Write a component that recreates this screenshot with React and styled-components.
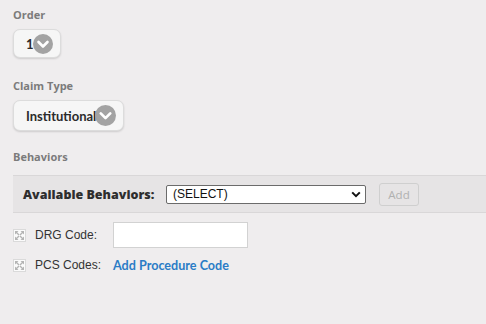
import React from "react";
import styled, { createGlobalStyle } from "styled-components";

const GlobalStyle = createGlobalStyle`
  html, body {
    margin: 0;
    padding: 0;
    background: #efedee;
  }
  body {
    font-family: "Lato", "Liberation Sans", sans-serif;
  }
`;

const Page = styled.div`
  padding: 8px 0 0 13px;
  width: 486px;
  height: 324px;
  box-sizing: border-box;
  overflow: hidden;
`;

const FieldLabel = styled.div`
  font-family: "Open Sans", sans-serif;
  font-weight: 700;
  font-size: 11px;
  line-height: 14px;
  color: #7b7b7b;
  margin-top: ${(p) => p.$top || 0}px;
`;

const PillSelect = styled.div`
  display: inline-flex;
  align-items: center;
  box-sizing: border-box;
  height: ${(p) => p.$h}px;
  margin-top: 7px;
  padding: 0 7px 0 12px;
  background: #f6f6f6;
  border: 1px solid #dcdcdc;
  border-radius: 7px;
  box-shadow: 0 1px 2px rgba(0, 0, 0, 0.14);
  font-family: "Lato", sans-serif;
  font-weight: 700;
  font-size: 13px;
  color: #2b2b2b;
`;

const Block = styled.div`
  display: block;
`;

const Band = styled.div`
  display: flex;
  align-items: center;
  box-sizing: border-box;
  height: 38px;
  margin-top: 11px;
  padding-left: 10px;
  background: #e6e4e5;
  border-top: 1px solid #d9d7d8;
  border-bottom: 1px solid #d9d7d8;
`;

const BandLabel = styled.span`
  font-family: "Open Sans", sans-serif;
  font-weight: 800;
  font-size: 12.5px;
  color: #2e2e2e;
  width: 143px;
  white-space: nowrap;
`;

const NativeSelect = styled.div`
  display: flex;
  align-items: center;
  justify-content: space-between;
  box-sizing: border-box;
  width: 200px;
  height: 19px;
  padding: 0 4px 0 6px;
  background: #fff;
  border: 1px solid #6b6b6b;
  border-radius: 2px;
  font-family: "Liberation Sans", sans-serif;
  font-size: 12px;
  color: #111;
`;

const AddButton = styled.button`
  margin-left: 13px;
  width: 40px;
  height: 23px;
  padding: 0;
  background: transparent;
  border: 1px solid #cfcfcf;
  border-radius: 3px;
  font-family: "Open Sans", sans-serif;
  font-size: 11.5px;
  color: #b0b0b0;
`;

const Row = styled.div`
  display: flex;
  align-items: center;
  height: ${(p) => p.$h}px;
  margin-top: ${(p) => p.$top}px;
`;

const RowLabel = styled.span`
  font-family: "Liberation Sans", sans-serif;
  font-size: 12px;
  color: #333;
  margin-left: 9px;
  width: 78px;
`;

const TextInput = styled.div`
  box-sizing: border-box;
  width: 135px;
  height: 26px;
  background: #fff;
  border: 1px solid #d2d2d2;
`;

const Link = styled.a`
  font-family: "Lato", sans-serif;
  font-weight: 700;
  font-size: 12.6px;
  color: #2a7cc6;
  text-decoration: none;
`;

function Chevron({ size }) {
  return (
    <svg width={size} height={size} viewBox="0 0 20 20" style={{ marginLeft: -1 }}>
      <circle cx="10" cy="10" r="10" fill="#a3a3a3" />
      <path d="M5.5 8 L10 12.5 L14.5 8" fill="none" stroke="#fff" strokeWidth="2.6" strokeLinecap="round" strokeLinejoin="round" />
    </svg>
  );
}

function SelectArrow() {
  return (
    <svg width="10" height="7" viewBox="0 0 10 7">
      <path d="M1.2 1.4 L5 5.2 L8.8 1.4" fill="none" stroke="#111" strokeWidth="2" />
    </svg>
  );
}

function BrokenImage() {
  return (
    <svg width="13" height="13" viewBox="0 0 13 13">
      <rect x="0.5" y="0.5" width="12" height="12" fill="#fbfbfb" stroke="#dadada" />
      <path d="M2 2 H5.5 L4.2 3.3 L6.5 5.5 L5.5 6.5 L3.3 4.2 L2 5.5 Z" fill="#b4b4b4" />
      <path d="M11 2 V5.5 L9.7 4.2 L7.5 6.5 L6.5 5.5 L8.8 3.3 L7.5 2 Z" fill="#b4b4b4" />
      <path d="M2 11 V7.5 L3.3 8.8 L5.5 6.5 L6.5 7.5 L4.2 9.7 L5.5 11 Z" fill="#b4b4b4" />
      <path d="M11 11 H7.5 L8.8 9.7 L6.5 7.5 L7.5 6.5 L9.7 8.8 L11 7.5 Z" fill="#b4b4b4" />
    </svg>
  );
}

export default function App() {
  return (
    <Page>
      <GlobalStyle />
      <FieldLabel>Order</FieldLabel>
      <Block>
        <PillSelect $h={29}>
          1<Chevron size={20} />
        </PillSelect>
      </Block>

      <FieldLabel $top={21}>Claim Type</FieldLabel>
      <Block>
        <PillSelect $h={31}>
          Institutional<Chevron size={21} />
        </PillSelect>
      </Block>

      <FieldLabel $top={19}>Behaviors</FieldLabel>
      <Band>
        <BandLabel>Available Behaviors:</BandLabel>
        <NativeSelect>
          (SELECT)
          <SelectArrow />
        </NativeSelect>
        <AddButton>Add</AddButton>
      </Band>

      <Row $h={26} $top={9}>
        <BrokenImage />
        <RowLabel>DRG Code:</RowLabel>
        <TextInput />
      </Row>
      <Row $h={14} $top={10}>
        <BrokenImage />
        <RowLabel>PCS Codes:</RowLabel>
        <Link href="#">Add Procedure Code</Link>
      </Row>
    </Page>
  );
}
